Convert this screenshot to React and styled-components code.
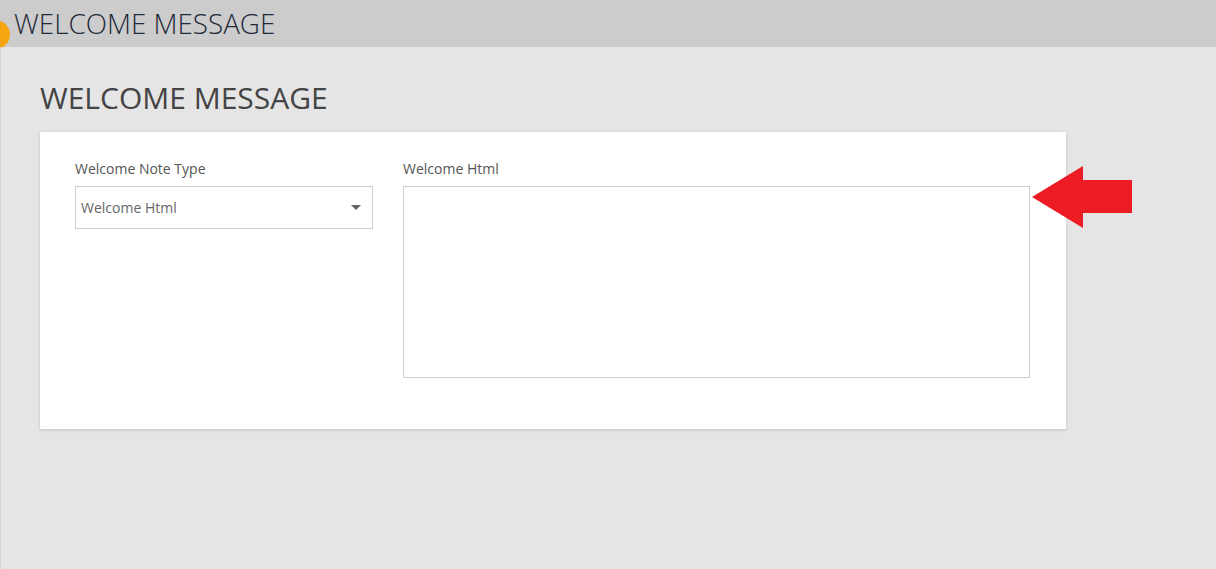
import React from "react";
import styled, { createGlobalStyle } from "styled-components";

const Global = createGlobalStyle`
  html, body { margin: 0; padding: 0; }
  body {
    background: #e5e5e5;
    font-family: "Open Sans", "Liberation Sans", sans-serif;
    overflow: hidden;
  }
  * { box-sizing: border-box; }
`;

const Shell = styled.div`
  position: relative;
  width: 1216px;
  height: 569px;
  background: #e5e5e5;
  overflow: hidden;
`;

const TopBar = styled.header`
  height: 47px;
  background: #cccccc;
  display: flex;
  align-items: center;
  padding-left: 14px;
`;

const TopTitle = styled.h1`
  margin: 0;
  font-size: 27.8px;
  font-weight: 300;
  color: #1f2a3a;
  letter-spacing: 0;
  line-height: 1;
  padding-top: 0;
`;

const Dot = styled.span`
  position: absolute;
  left: -19px;
  top: 20px;
  width: 29px;
  height: 29px;
  border-radius: 50%;
  background: #f5a50f;
`;

const Main = styled.main`
  position: relative;
  height: calc(100% - 47px);
  border-left: 1px solid #d6d6d6;
  padding: 32px 0 0 39px;
`;

const PageTitle = styled.h2`
  margin: 0 0 15px;
  font-size: 30px;
  font-weight: 400;
  color: #444;
  line-height: 38px;
`;

const Card = styled.section`
  width: 1026px;
  background: #fff;
  box-shadow: 0 1px 3px rgba(0, 0, 0, 0.15);
  padding: 28px 35px 51px;
  display: grid;
  grid-template-columns: 298px 627px;
  column-gap: 30px;
`;

const Field = styled.div`
  display: flex;
  flex-direction: column;
`;

const Label = styled.label`
  font-size: 14px;
  line-height: 20px;
  color: #555;
  margin-bottom: 6px;
  margin-top: -1px;
  padding-bottom: 1px;
`;

const Select = styled.div`
  height: 43px;
  border: 1px solid #cfcfcf;
  display: flex;
  align-items: center;
  justify-content: space-between;
  padding: 0 11px 0 5px;
  font-size: 14px;
  color: #666;
`;

const Caret = styled.span`
  width: 0;
  height: 0;
  border-left: 5px solid transparent;
  border-right: 5px solid transparent;
  border-top: 5px solid #666;
`;

const TextArea = styled.div`
  height: 192px;
  border: 1px solid #cfcfcf;
  background: #fff;
`;

const Arrow = styled.svg`
  position: absolute;
  left: 1030px;
  top: 119px;
`;

export default function App() {
  return (
    <>
      <Global />
      <Shell>
        <TopBar>
          <TopTitle>WELCOME MESSAGE</TopTitle>
        </TopBar>
        <Dot />
        <Main>
          <PageTitle>WELCOME MESSAGE</PageTitle>
          <Card>
            <Field>
              <Label>Welcome Note Type</Label>
              <Select>
                <span>Welcome Html</span>
                <Caret />
              </Select>
            </Field>
            <Field>
              <Label>Welcome Html</Label>
              <TextArea />
            </Field>
          </Card>
          <Arrow width="102" height="64" viewBox="0 0 102 64">
            <polygon
              points="1,31 52,0 52,14 101,14 101,47 52,47 52,62"
              fill="#ed1c24"
            />
          </Arrow>
        </Main>
      </Shell>
    </>
  );
}
